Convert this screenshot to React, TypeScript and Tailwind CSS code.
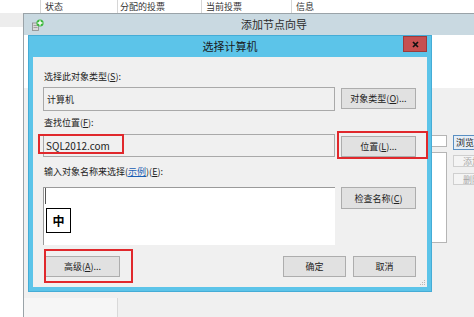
import React from "react";

const U = ({ c }: { c: string }) => <span className="underline">{c}</span>;

function Btn({
  children,
  className = "",
}: {
  children: React.ReactNode;
  className?: string;
}) {
  return (
    <div
      className={`flex items-center justify-center whitespace-nowrap border border-[#adadad] bg-[#e1e1e1] text-[9px] leading-none text-[#222] ${className}`}
    >
      {children}
    </div>
  );
}

export default function App() {
  return (
    <div className="relative h-[317px] w-[474px] overflow-hidden bg-white font-['Noto_Sans_CJK_SC','Microsoft_YaHei',sans-serif] text-[#222]">
      {/* background list header */}
      <div className="flex h-[13px] items-center whitespace-nowrap bg-white text-[9px] leading-none text-[#333]">
        <div className="h-full w-[40px]" />
        <div className="flex h-full w-[77px] items-center border-l border-[#d6d6d6] pl-[4px]">状态</div>
        <div className="flex h-full w-[84px] items-center border-l border-[#d6d6d6] pl-[2px]">分配的投票</div>
        <div className="flex h-full w-[90px] items-center border-l border-[#d6d6d6] pl-[4px]">当前投票</div>
        <div className="flex h-full flex-1 items-center border-l border-[#d6d6d6] pl-[4px]">信息</div>
      </div>
      <div className="h-[14px] bg-[#ededed]" />

      {/* outer wizard window */}
      <div className="absolute left-[23px] top-[13px] flex h-[310px] w-[520px] flex-col border-l border-t border-[#9aa3a8]">
        <div className="flex h-[21px] items-center bg-[#c9d9e1] pl-[8px]">
          <svg width="12" height="12" viewBox="0 0 12 12">
            <rect x="0.5" y="4" width="6" height="7.5" fill="#d9d9d9" stroke="#8a8a8a" strokeWidth="0.8" />
            <line x1="1.5" y1="6.5" x2="5.5" y2="6.5" stroke="#8a8a8a" strokeWidth="0.7" />
            <line x1="1.5" y1="8.5" x2="5.5" y2="8.5" stroke="#8a8a8a" strokeWidth="0.7" />
            <circle cx="8" cy="4" r="3.6" fill="#3cb83c" />
            <path d="M8 1.6 V6.4 M5.6 4 H10.4" stroke="#ffffff" strokeWidth="1.4" />
          </svg>
          <span className="ml-[197px] whitespace-nowrap text-[11px] leading-none text-[#2b2b2b]">添加节点向导</span>
        </div>
        <div className="flex flex-1 flex-col">
          <div className="h-[53px] bg-white" />
          <div className="flex flex-1 flex-col bg-[#f0f0f0]">
            <div className="mt-[47px] flex items-start pl-[401px]">
              <div className="h-[12px] w-[22px] shrink-0 border border-[#b5b5b5] bg-white" />
              <div className="ml-[6px] flex h-[15px] w-[60px] shrink-0 items-center whitespace-nowrap border border-[#5a8fc2] bg-[#e5eef7] pl-[2px] text-[9px] leading-none text-[#222]">
                浏览(B)...
              </div>
            </div>
            <div className="mt-[2px] flex items-start pl-[401px]">
              <div className="h-[91px] w-[22px] shrink-0 border border-[#b5b5b5] bg-white" />
              <div className="ml-[6px] flex shrink-0 flex-col">
                <div className="mt-[3px] flex h-[12px] w-[60px] items-center whitespace-nowrap border border-[#cfcfcf] bg-[#f4f4f4] pl-[9px] text-[9px] leading-none text-[#a8a8a8]">
                  添加(D)...
                </div>
                <div className="mt-[6px] flex h-[12px] w-[60px] items-center whitespace-nowrap border border-[#cfcfcf] bg-[#f4f4f4] pl-[9px] text-[9px] leading-none text-[#a8a8a8]">
                  删除(R)
                </div>
              </div>
            </div>
            <div className="mt-auto flex h-[25px]">
              <div className="w-[94px] border-r border-[#d9d9d9] bg-[#f6f6f6]" />
              <div className="flex-1" />
            </div>
          </div>
        </div>

        {/* inner dialog */}
        <div className="absolute left-[4px] top-[21px] flex h-[257px] w-[404px] flex-col border border-[#45acd6] bg-[#5cc4e9] px-[4px] pb-[4px]">
          <div className="relative flex h-[21px] items-center justify-center">
            <span className="text-[11px] leading-none text-[#1a1a1a]">选择计算机</span>
            <div className="absolute right-0 top-0 flex h-[16px] w-[24px] items-center justify-center border border-[#9c3c3c] bg-[#c75050]">
              <svg width="7" height="7" viewBox="0 0 7 7">
                <path d="M1 1 L6 6 M6 1 L1 6" stroke="#111" strokeWidth="1.7" />
              </svg>
            </div>
          </div>
          <div className="relative flex flex-1 flex-col bg-[#f0f0f0] pl-[10px] pr-[11px]">
            <div className="mt-[14px] h-[12px] pl-[1px] text-[9px] leading-[12px]">
              选择此对象类型(<U c="S" />):
            </div>
            <div className="mt-[4px] flex items-start">
              <div className="flex h-[24px] flex-1 items-center border border-[#a9a9a9] bg-[#f0f0f0] pl-[3px] text-[9px] leading-none">
                计算机
              </div>
              <Btn className="ml-[6px] mt-[1px] h-[21px] w-[75px]">
                对象类型(<U c="O" />)...
              </Btn>
            </div>
            <div className="mt-[6px] h-[12px] pl-[1px] text-[9px] leading-[12px]">
              查找位置(<U c="F" />):
            </div>
            <div className="mt-[5px] flex items-start">
              <div className="flex h-[23px] flex-1 items-center border border-[#a9a9a9] bg-[#f0f0f0] pl-[2px] text-[10px] leading-none">
                SQL2012.com
              </div>
              <Btn className="ml-[6px] mt-[2px] h-[21px] w-[75px]">
                位置(<U c="L" />)...
              </Btn>
            </div>
            <div className="mt-[9px] h-[12px] pl-[1px] text-[9px] leading-[12px]">
              输入对象名称来选择(<span className="text-[#1a5fb4] underline">示例</span>)(<U c="E" />):
            </div>
            <div className="mt-[9px] flex items-start">
              <div className="relative h-[58px] flex-1 border-l border-t border-[#9a9a9a] bg-white">
                <div className="ml-[1px] h-[16px] w-[1px] bg-[#555]" />
                <div className="ml-[2px] mt-[4px] flex h-[25px] w-[25px] items-center justify-center border border-black bg-white text-[12px] font-bold leading-none text-black">
                  中
                </div>
              </div>
              <Btn className="ml-[6px] h-[22px] w-[75px]">
                检查名称(<U c="C" />)
              </Btn>
            </div>
            <div className="mt-[11px] flex items-start">
              <Btn className="ml-[2px] h-[21px] w-[75px]">
                高级(<U c="A" />)...
              </Btn>
              <div className="flex-1" />
              <Btn className="h-[21px] w-[63px]">确定</Btn>
              <Btn className="ml-[7px] h-[21px] w-[63px]">取消</Btn>
            </div>
            <svg className="absolute bottom-[1px] right-[1px]" width="6" height="6" viewBox="0 0 6 6">
              <rect x="4" y="0" width="1" height="1" fill="#b8b8b8" />
              <rect x="2" y="2" width="1" height="1" fill="#b8b8b8" />
              <rect x="4" y="2" width="1" height="1" fill="#b8b8b8" />
              <rect x="0" y="4" width="1" height="1" fill="#b8b8b8" />
              <rect x="2" y="4" width="1" height="1" fill="#b8b8b8" />
              <rect x="4" y="4" width="1" height="1" fill="#b8b8b8" />
            </svg>
          </div>
        </div>
      </div>

      {/* red annotation boxes */}
      <div className="absolute left-[38px] top-[134px] h-[20px] w-[86px] border-2 border-[#e0282c]" />
      <div className="absolute left-[337px] top-[131px] h-[28px] w-[91px] border-2 border-[#e0282c]" />
      <div className="absolute left-[44px] top-[249px] h-[34px] w-[89px] border-2 border-[#e0282c]" />
    </div>
  );
}
